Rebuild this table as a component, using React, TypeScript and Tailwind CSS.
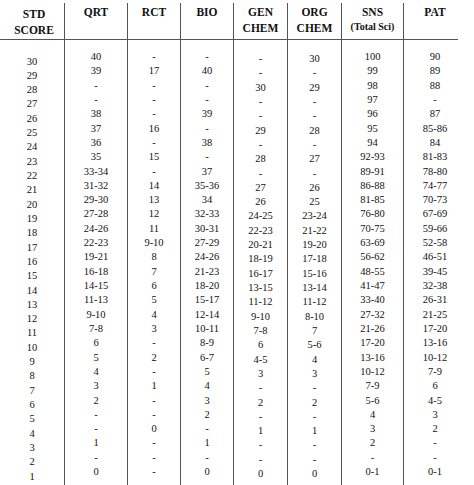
import React from 'react';

type Column = {
  key: string;
  head: React.ReactNode;
  width: string;
  bodyPad: string;
  lineWidth: string;
  values: string[];
};

const std = Array.from({ length: 30 }, (_, i) => String(30 - i));

const split = (s: string) => s.split(' ');

const columns: Column[] = [
  {
    key: 'std',
    head: (
      <div className="pt-[4px] leading-[15.5px] translate-x-[2px]">
        <div>STD</div>
        <div>SCORE</div>
      </div>
    ),
    width: 'w-[64px]',
    bodyPad: 'pt-[14.5px]',
    lineWidth: 'w-full',
    values: std,
  },
  {
    key: 'qrt',
    head: <div className="pt-[1px] leading-[16px]">QRT</div>,
    width: 'w-[63px]',
    bodyPad: 'pt-[10px]',
    lineWidth: 'w-full',
    values: split('40 39 - - 38 37 36 35 33-34 31-32 29-30 27-28 24-26 22-23 19-21 16-18 14-15 11-13 9-10 7-8 6 5 4 3 2 - - 1 - 0'),
  },
  {
    key: 'rct',
    head: <div className="pt-[1px] leading-[16px]">RCT</div>,
    width: 'w-[53px]',
    bodyPad: 'pt-[10px]',
    lineWidth: 'w-full',
    values: split('- 17 - - - 16 - 15 - 14 13 12 11 9-10 8 7 6 5 4 3 - 2 - 1 - - 0 - - -'),
  },
  {
    key: 'bio',
    head: <div className="pt-[1px] leading-[16px]">BIO</div>,
    width: 'w-[53px]',
    bodyPad: 'pt-[10px]',
    lineWidth: 'w-full',
    values: split('- 40 - - 39 - 38 - 37 35-36 34 32-33 30-31 27-29 24-26 21-23 18-20 15-17 12-14 10-11 8-9 6-7 5 4 3 2 - 1 - 0'),
  },
  {
    key: 'gen',
    head: (
      <div className="pt-[1px] leading-[16px]">
        <div>GEN</div>
        <div>CHEM</div>
      </div>
    ),
    width: 'w-[54px]',
    bodyPad: 'pt-[12px]',
    lineWidth: 'w-full',
    values: split('- - 30 - - 29 - 28 - 27 26 24-25 22-23 20-21 18-19 16-17 13-15 11-12 9-10 7-8 6 4-5 3 - 2 - 1 - - 0'),
  },
  {
    key: 'org',
    head: (
      <div className="pt-[1px] leading-[16px]">
        <div>ORG</div>
        <div>CHEM</div>
      </div>
    ),
    width: 'w-[54px]',
    bodyPad: 'pt-[12px]',
    lineWidth: 'w-full',
    values: split('30 - 29 - - 28 - 27 - 26 25 23-24 21-22 19-20 17-18 15-16 13-14 11-12 8-10 7 5-6 4 3 - 2 - 1 - - 0'),
  },
  {
    key: 'sns',
    head: (
      <div className="pt-[1px] leading-[16px]">
        <div>SNS</div>
        <div className="text-[10px] leading-[14px]">(Total Sci)</div>
      </div>
    ),
    width: 'w-[62px]',
    bodyPad: 'pt-[10px]',
    lineWidth: 'w-full',
    values: split('100 99 98 97 96 95 94 92-93 89-91 86-88 81-85 76-80 70-75 63-69 56-62 48-55 41-47 33-40 27-32 21-26 17-20 13-16 10-12 7-9 5-6 4 3 2 - 0-1'),
  },
  {
    key: 'pat',
    head: <div className="pt-[1px] leading-[16px]">PAT</div>,
    width: 'w-[63px]',
    bodyPad: 'pt-[10px]',
    lineWidth: 'w-[54px]',
    values: split('90 89 88 - 87 85-86 84 81-83 78-80 74-77 70-73 67-69 59-66 52-58 46-51 39-45 32-38 26-31 21-25 17-20 13-16 10-12 7-9 6 4-5 3 2 - - 0-1'),
  },
];

export default function App() {
  return (
    <div className="w-[474px] h-[485px] overflow-hidden bg-white text-[#111] font-['Liberation_Serif',serif]">
      <div className="flex mt-[3px]">
        {columns.map((col, ci) => (
          <div
            key={col.key}
            className={`${col.width} flex-none flex flex-col ${ci > 0 ? 'border-l border-[#555]' : ''}`}
          >
            {/* Header */}
            <div className="h-[37px] flex flex-col">
              <div className="flex-1 text-center text-[11.5px] font-bold">{col.head}</div>
              <div className={`${col.lineWidth} h-px bg-[#555]`} />
            </div>

            {/* Scores */}
            <div className={`${col.bodyPad} h-[450px] text-[10.5px]`}>
              {col.values.map((v, i) => (
                <div key={i} className="h-[14.32px] leading-[14.32px] text-center whitespace-nowrap">
                  {v}
                </div>
              ))}
            </div>
          </div>
        ))}
      </div>
    </div>
  );
}
